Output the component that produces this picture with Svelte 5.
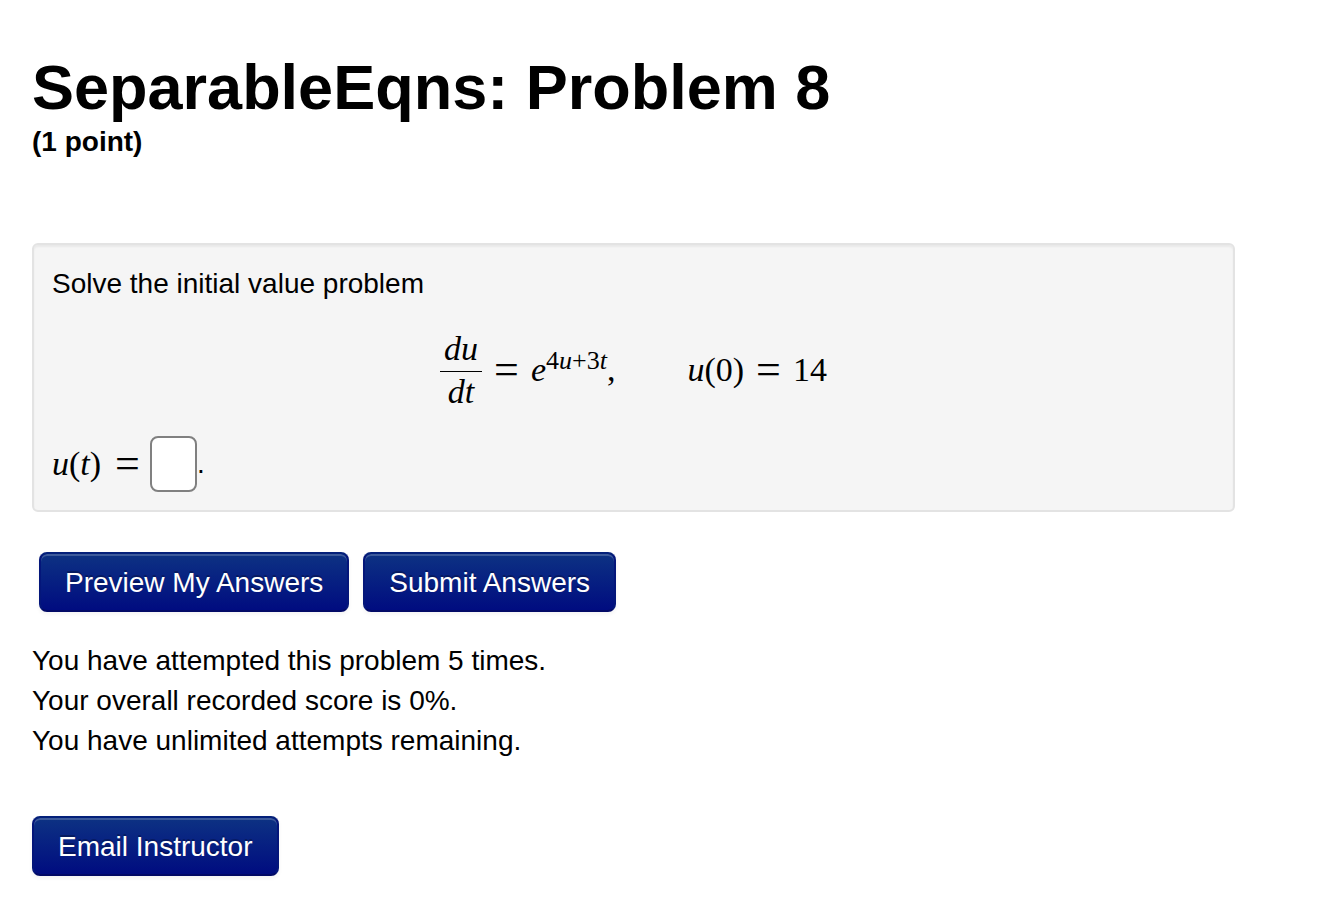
<script lang="ts">
  const title = 'SeparableEqns: Problem 8';
  const attempts = 5;
  const score = 0;

  let answer = $state('');
</script>

<main>
  <header>
    <h1>{title}</h1>
    <p class="points">(1 point)</p>
  </header>

  <form onsubmit={(e) => e.preventDefault()}>
    <section class="problem">
      <p>Solve the initial value problem</p>

      <div class="equation math">
        <span class="fraction">
          <span class="numerator"><i>du</i></span>
          <span class="denominator"><i>dt</i></span>
        </span>
        <span class="eq">=</span>
        <span class="power"><i>e</i><sup>4<i>u</i>+3<i>t</i></sup>,</span>
        <span class="condition"><i>u</i>(0)</span>
        <span class="eq">=</span>
        <span>14</span>
      </div>

      <div class="answer">
        <label class="math" for="answer"><span><i>u</i>(<i>t</i>)</span><span class="eq">=</span></label>
        <input id="answer" type="text" autocomplete="off" bind:value={answer} />
        <span>.</span>
      </div>
    </section>

    <div class="actions">
      <button type="button">Preview My Answers</button>
      <button type="submit">Submit Answers</button>
    </div>
  </form>

  <p class="status">
    You have attempted this problem {attempts} times.<br />
    Your overall recorded score is {score}%.<br />
    You have unlimited attempts remaining.
  </p>

  <button type="button">Email Instructor</button>
</main>

<style>
  :global(body) {
    margin: 0;
    background: #fff;
  }
  main {
    padding: 52px 87px 28px 32px;
    color: #000;
    font-family: 'Liberation Sans', Helvetica, Arial, sans-serif;
    font-size: 28px;
    line-height: 40px;
  }
  h1 {
    margin: 0;
    font-size: 63px;
    font-weight: 700;
    line-height: 70px;
  }
  p { margin: 0; }
  .points { font-weight: 700; }
  header { margin-bottom: 81px; }

  .problem {
    padding: 19px 18px 18px;
    border: 2px solid #e3e3e3;
    border-radius: 6px;
    background: #f5f5f5;
    box-shadow: inset 0 2px 2px rgba(0, 0, 0, 0.05);
  }

  /* ---------- Math ---------- */
  .math {
    display: flex;
    align-items: center;
    font-family: 'Liberation Serif', 'Times New Roman', serif;
    font-size: 34px;
    white-space: nowrap;
  }
  .eq {
    font-size: 44px;
  }
  .equation {
    justify-content: center;
    gap: 12px;
    margin: 23px 0 24px;
  }
  .fraction {
    display: flex;
    flex-direction: column;
    text-align: center;
  }
  .numerator {
    padding: 0 4px;
    border-bottom: 1px solid #000;
    line-height: 44px;
  }
  .denominator { line-height: 40px; }
  .power sup {
    font-size: 26px;
    line-height: 0;
    vertical-align: 12px;
  }
  .condition { margin-left: 60px; }

  /* ---------- Answer row ---------- */
  .answer {
    display: flex;
    align-items: center;
  }
  .answer .math {
    gap: 14px;
    margin-right: 10px;
  }
  input {
    box-sizing: border-box;
    width: 47px;
    height: 56px;
    padding: 8px;
    border: 2px solid #808080;
    border-radius: 8px;
    background: #fff;
    font: inherit;
  }

  /* ---------- Buttons ---------- */
  button {
    padding: 9px 24px 7px;
    border: 2px solid;
    border-color: #04207a #04167a #020a66;
    border-radius: 8px;
    background: linear-gradient(to bottom, #0d3283, #000c80) padding-box, #04167a;
    box-shadow:
      inset 0 2px 0 rgba(255, 255, 255, 0.2),
      0 2px 4px rgba(0, 0, 0, 0.05);
    color: #fff;
    font: inherit;
    text-shadow: 0 -2px 0 rgba(0, 0, 0, 0.25);
    cursor: pointer;
  }
  .actions {
    display: flex;
    flex-wrap: wrap;
    gap: 14px;
    margin: 40px 7px 29px;
  }
  .status { margin-bottom: 55px; }
</style>
